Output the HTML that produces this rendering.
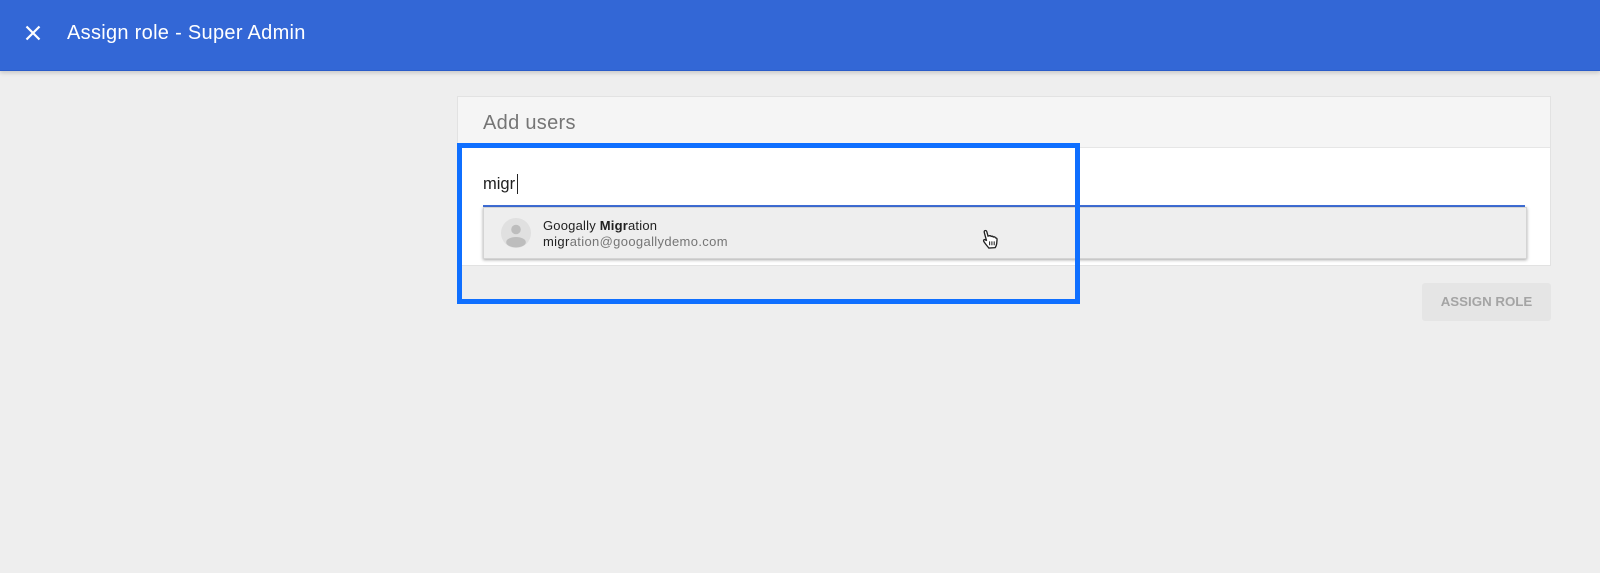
<!DOCTYPE html>
<html lang="en">
<head>
<meta charset="utf-8">
<title>Assign role - Super Admin</title>
<style>
html,body{margin:0;padding:0}
body{width:1600px;height:573px;position:relative;overflow:hidden;background:#eeeeee;font-family:"Liberation Sans",sans-serif}
div,span{box-sizing:border-box}
.a{position:absolute;white-space:nowrap}
.top{left:0;top:0;width:1600px;height:71px;background:#3367d6;border-bottom:1px solid #2a5cc9;box-shadow:0 2px 4px rgba(0,0,0,.16)}
.title{left:67px;top:21px;font-size:20px;line-height:24px;color:#fff;letter-spacing:.3px}
.card{left:457px;top:96px;width:1094px;height:170px;background:#fff;border:1px solid #e2e2e2}
.head{left:458px;top:97px;width:1092px;height:51px;background:#f5f5f5;border-bottom:1px solid #e6e6e6}
.addu{left:483px;top:110.5px;font-size:20px;line-height:24px;color:#757575;letter-spacing:.3px}
.q{left:483px;top:173px;font-size:16.5px;line-height:22px;color:#212121}
.caret{left:517px;top:174px;width:1px;height:20px;background:#222}
.line{left:483px;top:205px;width:1042px;height:2px;background:#3f6fd8}
.drop{left:483px;top:207px;width:1044px;height:52px;background:#eeeeee;border:1px solid #d4d4d4;box-shadow:0 1px 3px rgba(0,0,0,.35)}
.n1{left:543px;top:217.5px;font-size:13px;line-height:15px;color:#212121;letter-spacing:.2px}
.n2{left:543px;top:234px;font-size:13px;line-height:15px;color:#757575;letter-spacing:.35px}
.n2 span{color:#212121}
.btn{left:1422px;top:283px;width:129px;height:38px;background:#e5e5e5;border-radius:3px;color:#a4a4a4;font-size:13.3px;font-weight:bold;line-height:38px;text-align:center}
.box{left:457px;top:143px;width:623px;height:161px;border:5px solid #0f6fff}
</style>
</head>
<body>
<div class="a top"></div>
<svg class="a" style="left:24px;top:24px" width="18" height="18" viewBox="0 0 18 18"><path d="M2.5 2.5L15.5 15.5M15.5 2.5L2.5 15.5" stroke="#fff" stroke-width="2.2" fill="none"/></svg>
<div class="a title">Assign role - Super Admin</div>

<div class="a card"></div>
<div class="a head"></div>
<div class="a addu">Add users</div>
<div class="a q">migr</div>
<div class="a caret"></div>
<div class="a line"></div>
<div class="a drop"></div>
<svg class="a" style="left:500.5px;top:218px" width="30" height="30" viewBox="0 0 30 30">
<circle cx="15" cy="15" r="15" fill="#e0e0e0"/>
<circle cx="15" cy="11.5" r="4.8" fill="#bdbdbd"/>
<ellipse cx="15" cy="24.2" rx="9.8" ry="5.2" fill="#bdbdbd"/>
</svg>
<div class="a n1">Googally <b>Migr</b>ation</div>
<div class="a n2"><span>migr</span>ation@googallydemo.com</div>
<svg class="a" style="left:981px;top:229px" width="18" height="20" viewBox="0 0 18 21">
<path d="M3.5 1.8C4.6 1.2 5.4 1.8 5.7 3L6.9 7.4L8.6 7C9.4 6.9 10 7.2 10.3 7.8C11.2 7.4 12 7.6 12.4 8.4C13.4 8 14.4 8.4 14.8 9.3C15.8 9.3 16.5 10 16.4 11.2L16 15.5C15.8 17.3 15 18.6 14.4 19.6L7.8 20C6.6 18.4 5 16.8 3.2 14.2C2.2 12.8 1.8 11.8 2.8 11.2C3.6 10.8 4.5 11.4 5.4 12.4L3.2 4.4C2.8 3.2 2.8 2.2 3.5 1.8Z" fill="#fff" stroke="#222" stroke-width="1.4"/>
<path d="M8.6 13V17M11 13V17M13.4 13V17" stroke="#222" stroke-width="1.1" fill="none"/>
</svg>
<div class="a btn">ASSIGN ROLE</div>
<div class="a box"></div>
</body>
</html>
